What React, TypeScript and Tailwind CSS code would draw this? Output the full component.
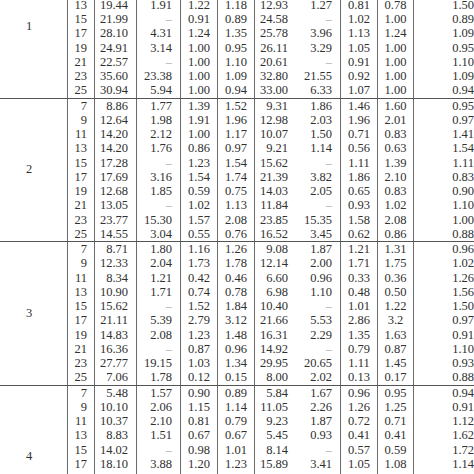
import React from 'react';

type Row = string[];

const D = '–';

const groups: { label: string; rows: Row[] }[] = [
  {
    label: '1',
    rows: [
      ['7', '', '', '', '', '', '', '', '', ''],
      ['9', '', '', '', '', '', '', '', '', ''],
      ['11', '', '', '', '', '', '', '', '', ''],
      ['13', '19.44', '1.91', '1.22', '1.18', '12.93', '1.27', '0.81', '0.78', '1.50'],
      ['15', '21.99', D, '0.91', '0.89', '24.58', D, '1.02', '1.00', '0.89'],
      ['17', '28.10', '4.31', '1.24', '1.35', '25.78', '3.96', '1.13', '1.24', '1.09'],
      ['19', '24.91', '3.14', '1.00', '0.95', '26.11', '3.29', '1.05', '1.00', '0.95'],
      ['21', '22.57', D, '1.00', '1.10', '20.61', D, '0.91', '1.00', '1.10'],
      ['23', '35.60', '23.38', '1.00', '1.09', '32.80', '21.55', '0.92', '1.00', '1.09'],
      ['25', '30.94', '5.94', '1.00', '0.94', '33.00', '6.33', '1.07', '1.00', '0.94'],
    ],
  },
  {
    label: '2',
    rows: [
      ['7', '8.86', '1.77', '1.39', '1.52', '9.31', '1.86', '1.46', '1.60', '0.95'],
      ['9', '12.64', '1.98', '1.91', '1.96', '12.98', '2.03', '1.96', '2.01', '0.97'],
      ['11', '14.20', '2.12', '1.00', '1.17', '10.07', '1.50', '0.71', '0.83', '1.41'],
      ['13', '14.20', '1.76', '0.86', '0.97', '9.21', '1.14', '0.56', '0.63', '1.54'],
      ['15', '17.28', D, '1.23', '1.54', '15.62', D, '1.11', '1.39', '1.11'],
      ['17', '17.69', '3.16', '1.54', '1.74', '21.39', '3.82', '1.86', '2.10', '0.83'],
      ['19', '12.68', '1.85', '0.59', '0.75', '14.03', '2.05', '0.65', '0.83', '0.90'],
      ['21', '13.05', D, '1.02', '1.13', '11.84', D, '0.93', '1.02', '1.10'],
      ['23', '23.77', '15.30', '1.57', '2.08', '23.85', '15.35', '1.58', '2.08', '1.00'],
      ['25', '14.55', '3.04', '0.55', '0.76', '16.52', '3.45', '0.62', '0.86', '0.88'],
    ],
  },
  {
    label: '3',
    rows: [
      ['7', '8.71', '1.80', '1.16', '1.26', '9.08', '1.87', '1.21', '1.31', '0.96'],
      ['9', '12.33', '2.04', '1.73', '1.78', '12.14', '2.00', '1.71', '1.75', '1.02'],
      ['11', '8.34', '1.21', '0.42', '0.46', '6.60', '0.96', '0.33', '0.36', '1.26'],
      ['13', '10.90', '1.71', '0.74', '0.78', '6.98', '1.10', '0.48', '0.50', '1.56'],
      ['15', '15.62', D, '1.52', '1.84', '10.40', D, '1.01', '1.22', '1.50'],
      ['17', '21.11', '5.39', '2.79', '3.12', '21.66', '5.53', '2.86', '3.2', '0.97'],
      ['19', '14.83', '2.08', '1.23', '1.48', '16.31', '2.29', '1.35', '1.63', '0.91'],
      ['21', '16.36', D, '0.87', '0.96', '14.92', D, '0.79', '0.87', '1.10'],
      ['23', '27.77', '19.15', '1.03', '1.34', '29.95', '20.65', '1.11', '1.45', '0.93'],
      ['25', '7.06', '1.78', '0.12', '0.15', '8.00', '2.02', '0.13', '0.17', '0.88'],
    ],
  },
  {
    label: '4',
    rows: [
      ['7', '5.48', '1.57', '0.90', '0.89', '5.84', '1.67', '0.96', '0.95', '0.94'],
      ['9', '10.10', '2.06', '1.15', '1.14', '11.05', '2.26', '1.26', '1.25', '0.91'],
      ['11', '10.37', '2.10', '0.81', '0.79', '9.23', '1.87', '0.72', '0.71', '1.12'],
      ['13', '8.83', '1.51', '0.67', '0.67', '5.45', '0.93', '0.41', '0.41', '1.62'],
      ['15', '14.02', D, '0.98', '1.01', '8.14', D, '0.57', '0.59', '1.72'],
      ['17', '18.10', '3.88', '1.20', '1.23', '15.89', '3.41', '1.05', '1.08', '1.14'],
      ['19', '', '', '', '', '', '', '', '', ''],
      ['21', '', '', '', '', '', '', '', '', ''],
      ['23', '', '', '', '', '', '', '', '', ''],
      ['25', '', '', '', '', '', '', '', '', ''],
    ],
  },
];

// per-column cell styles (borders + alignment)
const cellCls = [
  'border-l border-[#6b6b6b] text-right pr-[7px]',
  'border-l border-[#6b6b6b] text-right pr-[8px]',
  'border-l border-[#6b6b6b] text-right pr-[8px]',
  'border-l border-[#6b6b6b] text-center',
  'border-l border-[#6b6b6b] text-center',
  'border-l border-[#6b6b6b] text-right pr-[9px]',
  'text-right pr-[8px]',
  'border-l border-[#6b6b6b] text-center',
  'border-l border-[#6b6b6b] text-center',
  'border-l border-[#6b6b6b] text-right pr-[16px]',
];

function App() {
  return (
    <div className="w-[474px] h-[474px] overflow-hidden bg-white text-[#303030]">
      <div
        className="w-[490px] -mt-[45px] text-[12.5px]"
        style={{ fontFamily: '"Liberation Serif", "DejaVu Serif", serif' }}
      >
        {groups.map((g, gi) => (
          <div
            key={g.label}
            className={`flex ${gi > 0 ? 'border-t-[1.5px] border-[#555]' : ''}`}
          >
            <div className="w-[67px] shrink-0 flex items-center pl-[26px]">{g.label}</div>
            <div className="flex-1">
              {g.rows.map((r, ri) => (
                <div
                  key={ri}
                  className="grid grid-cols-[27px_42px_44px_37px_37px_43px_43px_37px_36px_77px] h-[14.25px] leading-[14.25px]"
                >
                  {r.map((v, ci) => (
                    <div
                      key={ci}
                      className={`${cellCls[ci]} ${v === D ? 'text-[#aaa]' : ''}`}
                    >
                      {v}
                    </div>
                  ))}
                </div>
              ))}
            </div>
          </div>
        ))}
      </div>
    </div>
  );
}

export default App;
